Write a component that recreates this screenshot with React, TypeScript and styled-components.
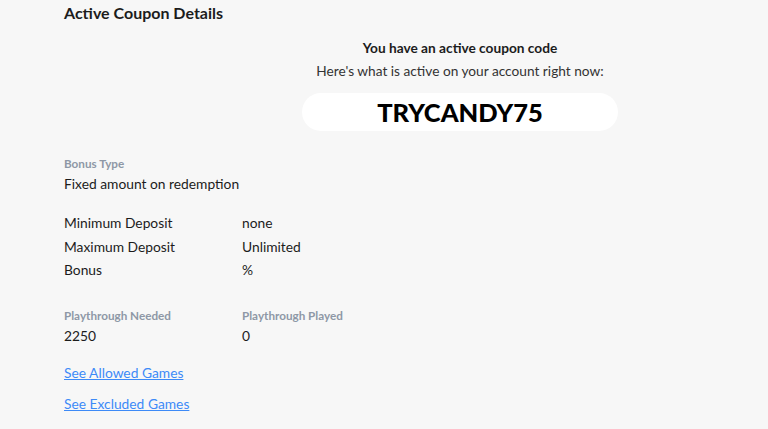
import { Fragment } from 'react';
import styled, { createGlobalStyle } from 'styled-components';

const GlobalStyle = createGlobalStyle`
  html, body {
    margin: 0;
    padding: 0;
    background: #f7f7f7;
    overflow: hidden;
  }
  body {
    font-family: Lato, "Liberation Sans", sans-serif;
    color: #1c1c1c;
  }
`;

const Page = styled.div`
  width: 768px;
  height: 429px;
  padding: 3px 0 0 64px;
  box-sizing: border-box;
`;

const Title = styled.h2`
  margin: 0;
  font-size: 16px;
  font-weight: 700;
  line-height: 20px;
`;

const CouponHeader = styled.div`
  display: flex;
  flex-direction: column;
  align-items: center;
  margin: 15px 0 0 88px;
`;

const Lead = styled.p`
  margin: 0;
  font-size: 13.7px;
  font-weight: 700;
  line-height: 20px;
`;

const Sub = styled.p`
  margin: 3px 0 0;
  font-size: 13.7px;
  line-height: 20px;
  color: #333;
`;

const CodePill = styled.div`
  margin-top: 12px;
  width: 316px;
  height: 38px;
  border-radius: 19px;
  background: #fff;
  display: flex;
  align-items: center;
  justify-content: center;
  font-size: 25.5px;
  font-weight: 900;
  color: #000;
`;

const Field = styled.div<{ $top?: number }>`
  margin-top: ${p => p.$top ?? 0}px;
`;

const Label = styled.div`
  font-size: 11.7px;
  font-weight: 700;
  line-height: 14px;
  color: #8e98a6;
`;

const Value = styled.div`
  margin-top: 4px;
  font-size: 13.8px;
  line-height: 20px;
`;

const Table = styled.div`
  margin-top: 19px;
  display: grid;
  grid-template-columns: 178px auto;
  row-gap: 3.5px;
  font-size: 13.8px;
  line-height: 20px;
`;

const Pair = styled.div`
  display: grid;
  grid-template-columns: 178px auto;
  margin-top: 28px;
`;

const GameLink = styled.a<{ $top: number }>`
  display: block;
  width: max-content;
  margin-top: ${p => p.$top}px;
  font-size: 13.8px;
  line-height: 20px;
  color: #3d8af7;
  text-decoration: underline;
  cursor: pointer;
`;

export default function App() {
  const limits = [
    ['Minimum Deposit', 'none'],
    ['Maximum Deposit', 'Unlimited'],
    ['Bonus', '%'],
  ];

  return (
    <>
      <GlobalStyle />
      <Page>
        <Title>Active Coupon Details</Title>

        <CouponHeader>
          <Lead>You have an active coupon code</Lead>
          <Sub>Here's what is active on your account right now:</Sub>
          <CodePill>TRYCANDY75</CodePill>
        </CouponHeader>

        <Field $top={25}>
          <Label>Bonus Type</Label>
          <Value>Fixed amount on redemption</Value>
        </Field>

        <Table>
          {limits.map(([k, v]) => (
            <Fragment key={k}>
              <div>{k}</div>
              <div>{v}</div>
            </Fragment>
          ))}
        </Table>

        <Pair>
          <Field>
            <Label>Playthrough Needed</Label>
            <Value>2250</Value>
          </Field>
          <Field>
            <Label>Playthrough Played</Label>
            <Value>0</Value>
          </Field>
        </Pair>

        <GameLink $top={17}>See Allowed Games</GameLink>
        <GameLink $top={11}>See Excluded Games</GameLink>
      </Page>
    </>
  );
}
